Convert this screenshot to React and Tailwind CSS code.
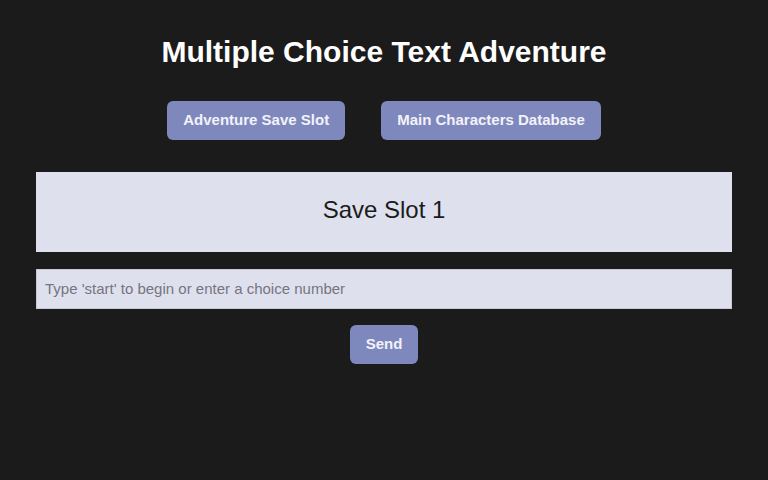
export default function App() {
  return (
    <div className="min-h-[480px] w-full bg-[#1b1b1b] px-[36px] pt-[34px]" style={{ fontFamily: '"Liberation Sans", Arial, sans-serif' }}>
      <h1 className="text-center text-[30px] font-bold leading-[36px] text-white">Multiple Choice Text Adventure</h1>
      <div className="mt-[31px] flex justify-center gap-[36px]">
        <button className="h-[39px] rounded-[6px] bg-[#7f88bd] px-[16px] text-[15px] font-bold text-[#f2f2f8]">Adventure Save Slot</button>
        <button className="h-[39px] rounded-[6px] bg-[#7f88bd] px-[16px] text-[15px] font-bold text-[#f2f2f8]">Main Characters Database</button>
      </div>
      <div className="mt-[32px] flex h-[80px] items-center justify-center bg-[#dfe0ee] pb-[5px]">
        <span className="text-[24px] text-[#1b1b1b]">Save Slot 1</span>
      </div>
      <input
        className="mt-[17px] block h-[40px] w-full border border-[#c8c8d0] bg-[#dfe0ee] px-[8px] pb-[2px] text-[15px] text-[#1b1b1b] outline-none placeholder:text-[#75757f]"
        placeholder="Type 'start' to begin or enter a choice number"
      />
      <div className="mt-[16px] flex justify-center">
        <button className="h-[39px] w-[68px] rounded-[6px] bg-[#7f88bd] text-[15px] font-bold text-[#f2f2f8]">Send</button>
      </div>
    </div>
  );
}
